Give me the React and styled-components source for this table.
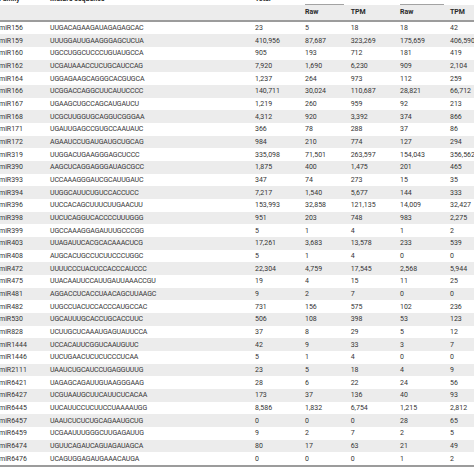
import React from 'react'
import styled, { createGlobalStyle } from 'styled-components'

const GlobalStyle = createGlobalStyle`
  html, body {
    margin: 0;
    padding: 0;
    background: #ffffff;
  }
  body {
    width: 474px;
    height: 474px;
    overflow: hidden;
    font-family: Roboto, 'Liberation Sans', Arial, sans-serif;
  }
`

// family, sequence, total, raw, tpm, raw, tpm
const COLS = '50px 205px 50px 45.7px 49.3px 50px 1fr'

const rows = [
  ['miR156', 'UUGACAGAAGAUAGAGAGCAC', '23', '5', '18', '18', '42'],
  ['miR159', 'UUUGGAUUGAAGGGAGCUCUA', '410,956', '87,687', '323,269', '175,659', '406,590'],
  ['miR160', 'UGCCUGGCUCCCUGUAUGCCA', '905', '193', '712', '181', '419'],
  ['miR162', 'UCGAUAAACCUCUGCAUCCAG', '7,920', '1,690', '6,230', '909', '2,104'],
  ['miR164', 'UGGAGAAGCAGGGCACGUGCA', '1,237', '264', '973', '112', '259'],
  ['miR166', 'UCGGACCAGGCUUCAUUCCCC', '140,711', '30,024', '110,687', '28,821', '66,712'],
  ['miR167', 'UGAAGCUGCCAGCAUGAUCU', '1,219', '260', '959', '92', '213'],
  ['miR168', 'UCGCUUGGUGCAGGUCGGGAA', '4,312', '920', '3,392', '374', '866'],
  ['miR171', 'UGAUUGAGCCGUGCCAAUAUC', '366', '78', '288', '37', '86'],
  ['miR172', 'AGAAUCCUGAUGAUGCUGCAG', '984', '210', '774', '127', '294'],
  ['miR319', 'UUGGACUGAAGGGAGCUCCC', '335,098', '71,501', '263,597', '154,043', '356,562'],
  ['miR390', 'AAGCUCAGGAGGGAUAGCGCC', '1,875', '400', '1,475', '201', '465'],
  ['miR393', 'UCCAAAGGGAUCGCAUUGAUC', '347', '74', '273', '15', '35'],
  ['miR394', 'UUGGCAUUCUGUCCACCUCC', '7,217', '1,540', '5,677', '144', '333'],
  ['miR396', 'UUCCACAGCUUUCUUGAACUU', '153,993', '32,858', '121,135', '14,009', '32,427'],
  ['miR398', 'UUCUCAGGUCACCCCUUUGGG', '951', '203', '748', '983', '2,275'],
  ['miR399', 'UGCCAAAGGAGAUUUGCCCGG', '5', '1', '4', '1', '2'],
  ['miR403', 'UUAGAUUCACGCACAAACUCG', '17,261', '3,683', '13,578', '233', '539'],
  ['miR408', 'AUGCACUGCCUCUUCCCUGGC', '5', '1', '4', '0', '0'],
  ['miR472', 'UUUUCCCUACUCCACCCAUCCC', '22,304', '4,759', '17,545', '2,568', '5,944'],
  ['miR475', 'UUACAAUUCCAUUGAUUAAACCGU', '19', '4', '15', '11', '25'],
  ['miR481', 'AGGACCUCACCUAACAGCUUAAGC', '9', '2', '7', '0', '0'],
  ['miR482', 'UUGCCUACUCCACCCAUGCCAC', '731', '156', '575', '102', '236'],
  ['miR530', 'UGCAUUUGCACCUGCACCUUC', '506', '108', '398', '53', '123'],
  ['miR828', 'UCUUGCUCAAAUGAGUAUUCCA', '37', '8', '29', '5', '12'],
  ['miR1444', 'UCCACAUUCGGUCAAUGUUC', '42', '9', '33', '3', '7'],
  ['miR1446', 'UUCUGAACUCUCUCCCUCAA', '5', '1', '4', '0', '0'],
  ['miR2111', 'UAAUCUGCAUCCUGAGGUUUG', '23', '5', '18', '4', '9'],
  ['miR6421', 'UAGAGCAGAUUGUAAGGGAAG', '28', '6', '22', '24', '56'],
  ['miR6427', 'UCGUAAUGCUUCAUUCUCACAA', '173', '37', '136', '40', '93'],
  ['miR6445', 'UUCAUUCCUCUUCCUAAAAUGG', '8,586', '1,832', '6,754', '1,215', '2,812'],
  ['miR6457', 'UAAUCUCUCUGCAGAAUGCUG', '0', '0', '0', '28', '65'],
  ['miR6459', 'UCGAAUUUGGGCUUGAGAUUG', '9', '2', '7', '2', '5'],
  ['miR6474', 'UGUUCAGAUCAGUAGAUAGCA', '80', '17', '63', '21', '49'],
  ['miR6476', 'UCAGUGGAGAUGAAACAUGA', '0', '0', '0', '1', '2'],
]

const Table = styled.div`
  width: 474px;
  color: #353535;
  font-size: 7px;
`

// top caption row, cropped by the screenshot edge
const CapRow = styled.div`
  display: grid;
  grid-template-columns: ${COLS};
  height: 5px;
  overflow: hidden;
  align-items: end;
`

const CapCell = styled.div`
  display: flex;
  flex-direction: column;
  justify-content: flex-end;
  height: 5px;
  font-weight: 700;
  line-height: 8px;
  white-space: nowrap;
  color: #2a2a2a;
  padding-bottom: ${p => (p.$rule ? '1px' : '2.5px')};
  box-sizing: border-box;
  margin-left: ${p => (p.$first ? '-1px' : '0')};
`

const GroupRule = styled.div`
  width: ${p => p.$w}px;
  height: 1.5px;
  background: #a3a3a3;
  margin-bottom: -1px;
`

const HeadRow = styled.div`
  display: grid;
  grid-template-columns: ${COLS};
  align-items: center;
  height: 13.5px;
  padding-bottom: 1px;
  background: #ececec;
  border-bottom: 2px solid #9c9c9c;
  font-weight: 700;
  color: #2a2a2a;
`

const Body = styled.div`
  border-bottom: 2px solid #9c9c9c;
`

const Row = styled.div`
  display: grid;
  grid-template-columns: ${COLS};
  align-items: center;
  height: 12.68px;
  background: ${p => (p.$shade ? '#ececec' : '#ffffff')};
`

const Cell = styled.div`
  white-space: nowrap;
  line-height: 8px;
  margin-left: ${p => (p.$first ? '-1px' : '0')};
  letter-spacing: ${p => (p.$seq ? '-0.15px' : '0')};
`

export default function App() {
  return (
    <>
      <GlobalStyle />
      <Table>
        <CapRow>
          <CapCell $first>Family</CapCell>
          <CapCell>Mature sequence</CapCell>
          <CapCell>Total</CapCell>
          <CapCell $rule>
            <GroupRule $w={39} />
          </CapCell>
          <CapCell />
          <CapCell $rule>
            <GroupRule $w={44} />
          </CapCell>
          <CapCell />
        </CapRow>
        <HeadRow>
          <Cell />
          <Cell />
          <Cell />
          <Cell>Raw</Cell>
          <Cell>TPM</Cell>
          <Cell>Raw</Cell>
          <Cell>TPM</Cell>
        </HeadRow>
        <Body>
          {rows.map((r, i) => (
            <Row key={r[0]} $shade={i % 2 === 1}>
              <Cell $first>{r[0]}</Cell>
              <Cell $seq>{r[1]}</Cell>
              {r.slice(2).map((v, j) => (
                <Cell key={j}>{v}</Cell>
              ))}
            </Row>
          ))}
        </Body>
      </Table>
    </>
  )
}
